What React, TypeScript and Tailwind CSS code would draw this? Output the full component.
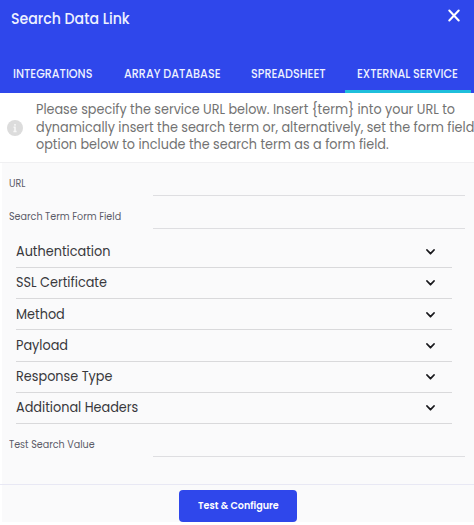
import React from "react";

const tabs = [
  { label: "INTEGRATIONS", box: "w-[108px] pl-[13px]", active: false },
  { label: "ARRAY DATABASE", box: "w-[127px] pl-4", active: false },
  { label: "SPREADSHEET", box: "w-[110px] pl-4", active: false },
  { label: "EXTERNAL SERVICE", box: "w-[126px] pl-3", active: true },
];

const sections = [
  "Authentication",
  "SSL Certificate",
  "Method",
  "Payload",
  "Response Type",
  "Additional Headers",
];

function Field({ label }: { label: string }) {
  return (
    <label className="flex h-[33px] w-[465px] pl-[9px]">
      <span className="w-36 whitespace-nowrap pt-[13px] text-[10.3px] leading-[15px] text-[#5c5c68]">
        <span className="inline-block origin-left scale-x-[0.93]">{label}</span>
      </span>
      <input className="min-w-0 flex-1 border-b border-[#dedee1] bg-transparent outline-none" />
    </label>
  );
}

export default function App() {
  return (
    <div className="flex h-[525px] w-[474px] flex-col overflow-hidden bg-white font-['Poppins','Inter',sans-serif]">
      <header className="flex h-[92.5px] shrink-0 flex-col justify-between bg-[#2f47eb] text-[#eef1ff]">
        <div className="flex items-start justify-between pl-[11px] pr-[14px] pt-[9px]">
          <h1 className="origin-left scale-x-[0.93] text-[15.2px] font-medium leading-5">Search Data Link</h1>
          <button aria-label="Close">
            <svg width="12" height="13" viewBox="0 0 12 13" fill="none" stroke="white" strokeWidth="2" strokeLinecap="round">
              <path d="M1.3 1.5 10.7 11.5M10.7 1.5 1.3 11.5" />
            </svg>
          </button>
        </div>
        <nav className="flex">
          {tabs.map((t) => (
            <div
              key={t.label}
              className={`h-[30px] shrink-0 whitespace-nowrap border-b-[3px] pt-[3px] text-[12px] font-medium leading-4 ${t.active ? "border-[#1fbfdc]" : "border-transparent"} ${t.box}`}
            >
              <span className="inline-block origin-left scale-x-[0.93]">{t.label}</span>
            </div>
          ))}
        </nav>
      </header>

      <div className="flex h-[70px] shrink-0 items-center border-b border-[#f0f0f2] bg-white pl-[6.5px]">
        <svg className="mt-px shrink-0" width="16" height="16" viewBox="0 0 16 16">
          <circle cx="8" cy="8" r="8" fill="#dcdcdc" />
          <path d="M8 4.1v1.7M6.6 7.3H8v4M6.4 11.4h3.2" stroke="#f7f7f7" strokeWidth="1.5" fill="none" />
        </svg>
        <p className="ml-[13.5px] origin-left scale-x-[0.93] whitespace-nowrap pt-px text-[13.75px] leading-[17.5px] text-[#727272]">
          <span className="block">Please specify the service URL below. Insert {"{term}"} into your URL to</span>
          <span className="block">dynamically insert the search term or, alternatively, set the form field</span>
          <span className="block">option below to include the search term as a form field.</span>
        </p>
      </div>

      <main className="ml-[2px] h-[321.5px] shrink-0 bg-[#fafafb]">
        <div className="-ml-[2px]">
          <Field label="URL" />
          <Field label="Search Term Form Field" />
          <div className="ml-4 mt-[8px] w-[436px]">
            {sections.map((label) => (
              <div key={label} className="flex h-[31.25px] items-center justify-between border-b border-[#d9d9db] pr-[17px] text-[13.8px] text-[#38383c]">
                <span className="origin-left scale-x-[0.93] pt-[1.5px]">{label}</span>
                <svg className="mt-px" width="9" height="6" viewBox="0 0 9 6" fill="none" stroke="#18181c" strokeWidth="1.8" strokeLinecap="round" strokeLinejoin="round">
                  <path d="M1 1l3.5 3.7L8 1" />
                </svg>
              </div>
            ))}
          </div>
          <Field label="Test Search Value" />
        </div>
      </main>

      <footer className="shrink-0 border-t border-[#e8e8f4]">
        <div className="ml-[2px] flex h-[37px] justify-center bg-[#fafafb] pt-[5px]">
          <button className="h-8 w-[118px] rounded-[4px] bg-[#2f47eb] text-[10.3px] font-semibold text-white">
            <span className="inline-block scale-x-[0.93]">Test &amp; Configure</span>
          </button>
        </div>
      </footer>
    </div>
  );
}
